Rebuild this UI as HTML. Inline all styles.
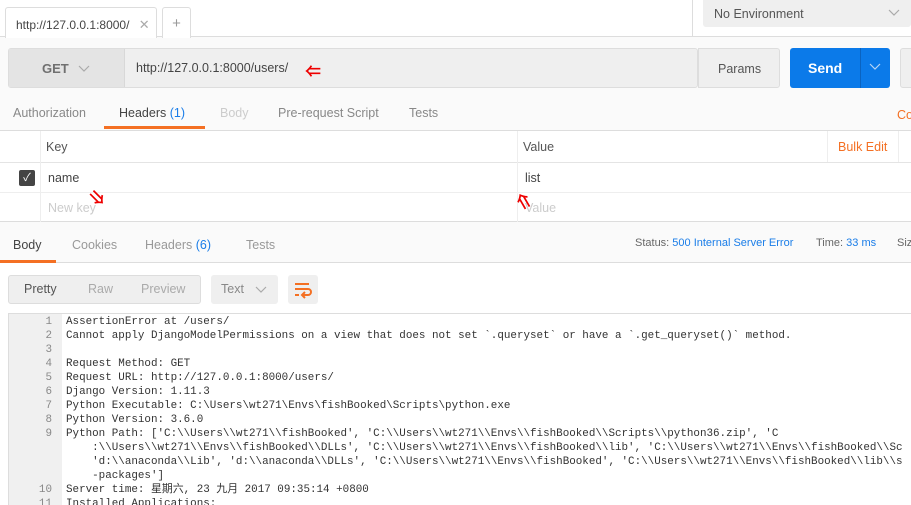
<!DOCTYPE html>
<html style="height:505px;overflow:hidden"><head><meta charset="utf-8"><style>
*{box-sizing:border-box;margin:0;padding:0}
body{width:911px;height:505px;overflow:hidden;background:#fafafa;font-family:"Liberation Sans","Noto Sans CJK SC",sans-serif;font-size:12px;color:#505050;position:relative}
.a{position:absolute}
.mono{font-family:"Liberation Mono","Noto Sans CJK SC",monospace;font-size:10.9px;color:#333;white-space:pre;line-height:14px}
.chev{position:absolute}
</style></head><body>
<div class="a" style="left:0;top:0;width:911px;height:37px;background:#fff;border-bottom:1px solid #ddd"></div>
<div class="a" style="left:5px;top:7px;width:152px;height:31px;background:#fff;border:1px solid #ddd;border-bottom:none;border-radius:3px 3px 0 0;padding:9px 0 0 10px;font-size:12px;color:#444">http://127.0.0.1:8000/ <span style="color:#aaa;margin-left:6px;font-size:13px">✕</span></div>
<div class="a" style="left:162px;top:7px;width:29px;height:31px;background:#fff;border:1px solid #ddd;border-bottom:none;border-radius:3px 3px 0 0;text-align:center;padding-top:7px;color:#999;font-size:15px">+</div>
<div class="a" style="left:692px;top:0;width:1px;height:37px;background:#ddd"></div>
<div class="a" style="left:703px;top:0;width:208px;height:27px;background:#efefef;border-radius:0 0 3px 3px;padding:7px 0 0 11px;color:#555;font-size:12.5px">No Environment</div>
<svg class="chev" style="left:888px;top:9px" width="12" height="8"><path d="M1 1l5 5 5-5" fill="none" stroke="#aaa" stroke-width="1.2"/></svg>

<div class="a" style="left:8px;top:48px;width:690px;height:40px;background:#efefef;border:1px solid #ddd;border-radius:3px"></div>
<div class="a" style="left:9px;top:49px;width:116px;height:38px;background:#e4e4e4;border-right:1px solid #d8d8d8;padding:12px 0 0 33px;font-weight:bold;color:#707070;font-size:13px">GET</div>
<svg class="chev" style="left:78px;top:65px" width="12" height="8"><path d="M1 1l5 5 5-5" fill="none" stroke="#aaa" stroke-width="1.2"/></svg>
<div class="a" style="left:136px;top:61px;color:#444;font-size:12.5px">http://127.0.0.1:8000/users/</div>
<div class="a" style="left:305px;top:58px;color:#e00;font-size:16px;font-weight:bold">⇐</div>
<div class="a" style="left:698px;top:48px;width:82px;height:40px;border:1px solid #ddd;border-radius:0 3px 3px 0;background:#efefef;padding:13px 0 0 19px;color:#555;font-size:12.5px">Params</div>
<div class="a" style="left:790px;top:48px;width:100px;height:40px;background:#0b7ae9;border-radius:3px;color:#fff;font-weight:bold;font-size:14px;padding:12px 0 0 18px">Send</div>
<div class="a" style="left:860px;top:48px;width:1px;height:40px;background:#0a63c0"></div>
<svg class="chev" style="left:869px;top:63px" width="12" height="8"><path d="M1 1l5 5 5-5" fill="none" stroke="#b8d5f5" stroke-width="1.2"/></svg>
<div class="a" style="left:900px;top:48px;width:20px;height:40px;background:#efefef;border:1px solid #ddd;border-radius:3px"></div>

<div class="a" style="left:13px;top:106px;color:#888;font-size:12.5px">Authorization</div>
<div class="a" style="left:119px;top:106px;color:#444;font-size:12.5px">Headers <span style="color:#1a7de8">(1)</span></div>
<div class="a" style="left:104px;top:126px;width:101px;height:3px;background:#f47023"></div>
<div class="a" style="left:220px;top:106px;color:#ccc;font-size:12.5px">Body</div>
<div class="a" style="left:278px;top:106px;color:#888;font-size:12.5px">Pre-request Script</div>
<div class="a" style="left:409px;top:106px;color:#888;font-size:12.5px">Tests</div>
<div class="a" style="left:897px;top:108px;color:#f47023;font-size:12.5px">Co</div>

<div class="a" style="left:0;top:130px;width:911px;height:92px;background:#fff;border-top:1px solid #ddd;border-bottom:1px solid #ddd"></div>
<div class="a" style="left:0;top:162px;width:911px;height:1px;background:#e4e4e4"></div>
<div class="a" style="left:0;top:192px;width:911px;height:1px;background:#eee"></div>
<div class="a" style="left:40px;top:131px;width:1px;height:91px;background:#eee"></div>
<div class="a" style="left:517px;top:131px;width:1px;height:91px;background:#eee"></div>
<div class="a" style="left:827px;top:131px;width:1px;height:31px;background:#eee"></div>
<div class="a" style="left:898px;top:131px;width:1px;height:31px;background:#eee"></div>
<div class="a" style="left:46px;top:140px;color:#555;font-size:12.5px">Key</div>
<div class="a" style="left:523px;top:140px;color:#555;font-size:12.5px">Value</div>
<div class="a" style="left:838px;top:140px;color:#f47023;font-size:12.5px">Bulk Edit</div>
<div class="a" style="left:19px;top:170px;width:16px;height:16px;background:#444;border-radius:2px;color:#fff;font-size:11px;text-align:center;line-height:16px">✓</div>
<div class="a" style="left:48px;top:171px;color:#444;font-size:12.5px">name</div>
<div class="a" style="left:525px;top:171px;color:#444;font-size:12.5px">list</div>
<div class="a" style="left:48px;top:201px;color:#ccc;font-size:12.5px">New key</div>
<div class="a" style="left:525px;top:201px;color:#ccc;font-size:12.5px">Value</div>
<div class="a" style="left:88px;top:186px;color:#e00;font-size:17px;font-weight:bold;transform:rotate(-135deg)">⇐</div>
<div class="a" style="left:516px;top:188px;color:#e00;font-size:17px;font-weight:bold;transform:rotate(60deg)">⇐</div>

<div class="a" style="left:0;top:262px;width:911px;height:1px;background:#ddd"></div>
<div class="a" style="left:0;top:260px;width:56px;height:3px;background:#f47023"></div>
<div class="a" style="left:13px;top:238px;color:#444;font-size:12.5px">Body</div>
<div class="a" style="left:72px;top:238px;color:#999;font-size:12.5px">Cookies</div>
<div class="a" style="left:145px;top:238px;color:#999;font-size:12.5px">Headers <span style="color:#1a7de8">(6)</span></div>
<div class="a" style="left:246px;top:238px;color:#999;font-size:12.5px">Tests</div>
<div class="a" style="left:635px;top:237px;color:#666;font-size:11px">Status: <span style="color:#1a7de8">500 Internal Server Error</span></div>
<div class="a" style="left:816px;top:237px;color:#666;font-size:11px">Time: <span style="color:#1a7de8">33 ms</span></div>
<div class="a" style="left:897px;top:237px;color:#666;font-size:11px">Siz</div>

<div class="a" style="left:0;top:263px;width:911px;height:242px;background:#fff"></div>
<div class="a" style="left:8px;top:275px;width:193px;height:29px;background:#efefef;border:1px solid #ddd;border-radius:3px"></div>
<div class="a" style="left:24px;top:282px;color:#555;font-size:12.5px">Pretty</div>
<div class="a" style="left:88px;top:282px;color:#aaa;font-size:12.5px">Raw</div>
<div class="a" style="left:141px;top:282px;color:#aaa;font-size:12.5px">Preview</div>
<div class="a" style="left:211px;top:275px;width:67px;height:29px;background:#efefef;border-radius:3px"></div>
<div class="a" style="left:221px;top:282px;color:#888;font-size:12.5px">Text</div>
<svg class="chev" style="left:255px;top:286px" width="12" height="8"><path d="M1 1l5 5 5-5" fill="none" stroke="#aaa" stroke-width="1.2"/></svg>
<div class="a" style="left:288px;top:275px;width:30px;height:29px;background:#efefef;border-radius:3px">
<svg width="30" height="29"><path d="M7 9h14M7 14h13a3 3 0 0 1 0 6h-5M17 17l-3 3 3 3M7 20h4" fill="none" stroke="#f47023" stroke-width="2"/></svg></div>

<div class="a" style="left:8px;top:313px;width:910px;height:192px;border:1px solid #ddd;border-bottom:none;background:#fff;overflow:hidden"></div>
<div class="a" style="left:9px;top:314px;width:53px;height:191px;background:#f0f0f0"></div>
<div class="a mono" style="left:30px;top:315px;width:22px;text-align:right;color:#888">1
2
3
4
5
6
7
8
9



10
11</div>
<div class="a mono" style="left:66px;top:315px">AssertionError at /users/
Cannot apply DjangoModelPermissions on a view that does not set `.queryset` or have a `.get_queryset()` method.

Request Method: GET
Request URL: http://127.0.0.1:8000/users/
Django Version: 1.11.3
Python Executable: C:\Users\wt271\Envs\fishBooked\Scripts\python.exe
Python Version: 3.6.0
Python Path: ['C:\\Users\\wt271\\fishBooked', 'C:\\Users\\wt271\\Envs\\fishBooked\\Scripts\\python36.zip', 'C
    :\\Users\\wt271\\Envs\\fishBooked\\DLLs', 'C:\\Users\\wt271\\Envs\\fishBooked\\lib', 'C:\\Users\\wt271\\Envs\\fishBooked\\Sc
    'd:\\anaconda\\Lib', 'd:\\anaconda\\DLLs', 'C:\\Users\\wt271\\Envs\\fishBooked', 'C:\\Users\\wt271\\Envs\\fishBooked\\lib\\s
    -packages']
Server time: 星期六, 23 九月 2017 09:35:14 +0800
Installed Applications:</div>
</body></html>
